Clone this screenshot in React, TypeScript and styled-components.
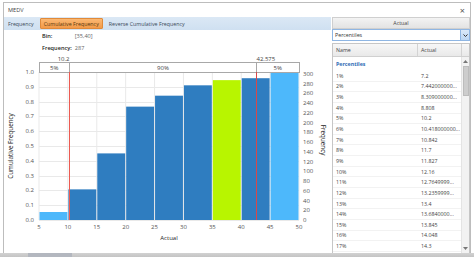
import React from "react";
import styled, { createGlobalStyle } from "styled-components";

const GlobalStyle = createGlobalStyle`
  html, body { margin: 0; padding: 0; background: #ffffff; }
  body { font-family: "Open Sans", "Noto Sans", sans-serif; font-size: 5.3px; color: #333; }
  #root { width: 474px; height: 257px; }
  * { box-sizing: border-box; }
`;

const Screen = styled.div`
  width: 474px;
  height: 257px;
  display: flex;
  flex-direction: column;
  overflow: hidden;
  background: #fff;
`;

const Window = styled.div`
  margin: 2px 3px 0 3px;
  height: 251px;
  border: 1px solid #bdbdbd;
  border-bottom: none;
  display: flex;
  flex-direction: column;
`;

const TitleBar = styled.div`
  height: 14px;
  display: flex;
  align-items: center;
  justify-content: space-between;
  padding: 0 5px 0 4px;
  color: #444;
  font-size: 5.6px;
`;

const Close = styled.span`
  font-size: 9px;
  color: #555;
  line-height: 1;
`;

const Body = styled.div`
  flex: 1;
  display: flex;
  gap: 1px;
  min-height: 0;
`;

const LeftPane = styled.div`
  width: 327px;
  display: flex;
  flex-direction: column;
`;

const TabBar = styled.div`
  height: 13px;
  background: linear-gradient(#dbe8f5, #cfe0f1);
  display: flex;
  align-items: center;
  gap: 2px;
`;

const Tab = styled.div<{ $active?: boolean }>`
  height: 11px;
  padding: 0 3px;
  display: flex;
  align-items: center;
  border-radius: 1px;
  color: ${(p) => (p.$active ? "#5a3a10" : "#3b4a5a")};
  background: ${(p) => (p.$active ? "linear-gradient(#fbb873, #f39a48)" : "transparent")};
  border: 1px solid ${(p) => (p.$active ? "#e08a3a" : "transparent")};
`;

const ChartArea = styled.div`
  flex: 1;
  display: flex;
  flex-direction: column;
  min-height: 0;
`;

const Info = styled.div`
  display: grid;
  grid-template-columns: auto 1fr;
  column-gap: 3px;
  line-height: 12px;
  padding-left: 38px;
  height: 24px;
  font-size: 5.6px;
`;

const InfoLabel = styled.span`
  color: #222;
  font-weight: 600;
`;

const InfoValue = styled.span`
  color: #666;
`;

const ChartSvg = styled.svg`
  display: block;
  font-family: "Open Sans", "Noto Sans", sans-serif;
  font-size: 6px;
`;

const RightPane = styled.div`
  flex: 1;
  display: flex;
  flex-direction: column;
  min-width: 0;
`;

const PaneHeader = styled.div`
  height: 12px;
  border: 1px solid #cfcfcf;
  background: linear-gradient(#f3f3f3, #e3e3e3);
  display: flex;
  align-items: center;
  justify-content: center;
  color: #444;
`;

const Dropdown = styled.div`
  height: 12px;
  border: 1px solid #8fb6e3;
  background: #fff;
  display: flex;
  align-items: center;
  justify-content: space-between;
  padding-left: 2px;
  color: #333;
`;

const DropButton = styled.div`
  width: 9px;
  height: 100%;
  background: linear-gradient(#dbe9f8, #bcd6f2);
  border-left: 1px solid #8fb6e3;
  display: flex;
  align-items: center;
  justify-content: center;
`;

const Table = styled.div`
  flex: 1;
  margin-top: 2px;
  border: 1px solid #c6c6c6;
  border-bottom: none;
  display: flex;
  flex-direction: column;
  min-height: 0;
`;

const HeaderRow = styled.div`
  height: 13px;
  display: grid;
  grid-template-columns: 85px 44px 1fr;
  background: linear-gradient(#f7f7f7, #e9e9e9);
  border-bottom: 1px solid #d0d0d0;
  color: #444;
`;

const HeaderCell = styled.div`
  display: flex;
  align-items: center;
  padding-left: 3px;
  border-right: 1px solid #d3d3d3;
`;

const TableBody = styled.div`
  flex: 1;
  display: flex;
  min-height: 0;
`;

const Rows = styled.div`
  flex: 1;
  overflow: hidden;
  min-width: 0;
`;

const GroupRow = styled.div`
  height: 14px;
  display: flex;
  align-items: center;
  padding-left: 3px;
  color: #2f6db5;
  font-weight: 700;
`;

const Row = styled.div`
  height: 10.65px;
  display: grid;
  grid-template-columns: 85px 44px;
  border-bottom: 1px solid #f2f2f2;
  align-items: center;
  color: #444;
`;

const Cell = styled.div`
  padding-left: 3px;
  white-space: nowrap;
`;

const Scrollbar = styled.div`
  width: 8px;
  background: #f2f2f2;
  border-left: 1px solid #e4e4e4;
  display: flex;
  flex-direction: column;
  align-items: center;
  padding: 3px 0;
`;

const Thumb = styled.div`
  width: 6px;
  height: 30px;
  margin-top: 3px;
  background: #cdcdcd;
  border: 1px solid #bcbcbc;
`;

const ScrollSpacer = styled.div`
  flex: 1;
`;

const BottomBand = styled.div`
  flex: 1;
  background: linear-gradient(#d2d2d2, #c4c4c4);
  display: flex;
  padding-left: 28px;
`;

const BandShade = styled.div`
  width: 44px;
  background: #b3b7bf;
`;

const X0 = 39;
const X1 = 299;
const YT = 72;
const YB = 220;
const xs = (v: number) => X0 + ((v - 5) * (X1 - X0)) / 45;
const ys = (f: number) => YB - f * (YB - YT);
const yr = (n: number) => YB - (n * (YB - 74)) / 300;

const DARK = "#2f7dc0";
const LIGHT = "#4db8fb";
const LIME = "#b8f500";

const bars = [
  { v: 0.054, c: LIGHT },
  { v: 0.207, c: DARK },
  { v: 0.45, c: DARK },
  { v: 0.766, c: DARK },
  { v: 0.84, c: DARK },
  { v: 0.91, c: DARK },
  { v: 0.945, c: LIME },
  { v: 0.958, c: DARK },
  { v: 1.0, c: LIGHT },
];

const L1 = Math.round(xs(10.2)) + 0.5;
const L2 = Math.round(xs(42.575)) + 0.5;

function Chart() {
  const xTicks = [5, 10, 15, 20, 25, 30, 35, 40, 45, 50];
  const yTicks = Array.from({ length: 11 }, (_, i) => i / 10);
  const rTicks = Array.from({ length: 16 }, (_, i) => i * 20);
  return (
    <ChartSvg width={327} height={196} viewBox="4 54 327 196">
      {xTicks.map((t) => (
        <line key={"gx" + t} x1={xs(t)} x2={xs(t)} y1={YT} y2={YB} stroke="#e9e9e9" strokeWidth={1} />
      ))}
      {yTicks.map((t) => (
        <line key={"gy" + t} x1={X0} x2={X1} y1={Math.round(ys(t)) + 0.5} y2={Math.round(ys(t)) + 0.5} stroke="#e9e9e9" strokeWidth={1} />
      ))}
      {bars.map((b, i) => {
        const x = xs(5 + i * 5);
        const w = xs(10 + i * 5) - x;
        return <rect key={i} x={x + 0.5} y={ys(b.v)} width={w - 1} height={YB - ys(b.v)} fill={b.c} />;
      })}
      <rect x={X0 + 0.5} y={62.5} width={X1 - X0} height={10} fill="#fff" stroke="#a8a8a8" strokeWidth={1} />
      <line x1={L1} x2={L1} y1={62.5} y2={72.5} stroke="#a8a8a8" />
      <line x1={L2} x2={L2} y1={62.5} y2={72.5} stroke="#a8a8a8" />
      <text x={(X0 + L1) / 2} y={69.6} textAnchor="middle" fill="#444">5%</text>
      <text x={(L1 + L2) / 2} y={69.6} textAnchor="middle" fill="#444">90%</text>
      <text x={(L2 + X1) / 2} y={69.6} textAnchor="middle" fill="#444">5%</text>
      <line x1={L1} x2={L1} y1={72} y2={YB} stroke="#ec5a52" strokeWidth={1} />
      <line x1={L2} x2={L2} y1={72} y2={YB} stroke="#d8484a" strokeWidth={1} />
      <text x={L1} y={61} textAnchor="end" fill="#444">10.2</text>
      <text x={L2} y={61} textAnchor="start" fill="#444">42.575</text>
      {yTicks.map((t) => (
        <text key={"ly" + t} x={34} y={ys(t) + 2} textAnchor="end" fill="#555">
          {t.toFixed(1)}
        </text>
      ))}
      {rTicks.map((t) => (
        <text key={"ry" + t} x={303} y={yr(t) + 2} textAnchor="start" fill="#555">
          {t}
        </text>
      ))}
      {xTicks.map((t) => (
        <text key={"lx" + t} x={xs(t)} y={229} textAnchor="middle" fill="#555">
          {t}
        </text>
      ))}
      <text x={(X0 + X1) / 2} y={240} textAnchor="middle" fill="#222">Actual</text>
      <text x={13} y={146} textAnchor="middle" fill="#222" fontSize={6.3} transform="rotate(-90 13 146)">Cumulative Frequency</text>
      <text x={321} y={140} textAnchor="middle" fill="#222" fontSize={6.3} transform="rotate(90 321 140)">Frequency</text>
    </ChartSvg>
  );
}

const percentiles: [string, string][] = [
  ["1%", "7.2"],
  ["2%", "7.442000000..."],
  ["3%", "8.309000000..."],
  ["4%", "8.808"],
  ["5%", "10.2"],
  ["6%", "10.418000000..."],
  ["7%", "10.842"],
  ["8%", "11.7"],
  ["9%", "11.827"],
  ["10%", "12.16"],
  ["11%", "12.7649999..."],
  ["12%", "13.2359999..."],
  ["13%", "13.4"],
  ["14%", "13.6840000..."],
  ["15%", "13.845"],
  ["16%", "14.048"],
  ["17%", "14.3"],
];

const Arrow = ({ up }: { up?: boolean }) => (
  <svg width="5" height="3" viewBox="0 0 5 3">
    <polygon points={up ? "0,3 2.5,0 5,3" : "0,0 2.5,3 5,0"} fill="#777" />
  </svg>
);

export default function App() {
  return (
    <>
      <GlobalStyle />
      <Screen>
        <Window>
          <TitleBar>
            <span>MEDV</span>
            <Close>×</Close>
          </TitleBar>
          <Body>
            <LeftPane>
              <TabBar>
                <Tab>Frequency</Tab>
                <Tab $active>Cumulative Frequency</Tab>
                <Tab>Reverse Cumulative Frequency</Tab>
              </TabBar>
              <ChartArea>
                <Info>
                  <InfoLabel>Bin:</InfoLabel>
                  <InfoValue>[35,40]</InfoValue>
                  <InfoLabel>Frequency:</InfoLabel>
                  <InfoValue>287</InfoValue>
                </Info>
                <Chart />
              </ChartArea>
            </LeftPane>
            <RightPane>
              <PaneHeader>Actual</PaneHeader>
              <Dropdown>
                <span>Percentiles</span>
                <DropButton>
                  <svg width="5" height="3" viewBox="0 0 5 3">
                    <polyline points="0.5,0.5 2.5,2.5 4.5,0.5" fill="none" stroke="#333" strokeWidth="1" />
                  </svg>
                </DropButton>
              </Dropdown>
              <Table>
                <HeaderRow>
                  <HeaderCell>Name</HeaderCell>
                  <HeaderCell>Actual</HeaderCell>
                  <div />
                </HeaderRow>
                <TableBody>
                  <Rows>
                    <GroupRow>Percentiles</GroupRow>
                    {percentiles.map(([n, v]) => (
                      <Row key={n}>
                        <Cell>{n}</Cell>
                        <Cell>{v}</Cell>
                      </Row>
                    ))}
                  </Rows>
                  <Scrollbar>
                    <Arrow up />
                    <Thumb />
                    <ScrollSpacer />
                    <Arrow />
                  </Scrollbar>
                </TableBody>
              </Table>
            </RightPane>
          </Body>
        </Window>
        <BottomBand>
          <BandShade />
        </BottomBand>
      </Screen>
    </>
  );
}
